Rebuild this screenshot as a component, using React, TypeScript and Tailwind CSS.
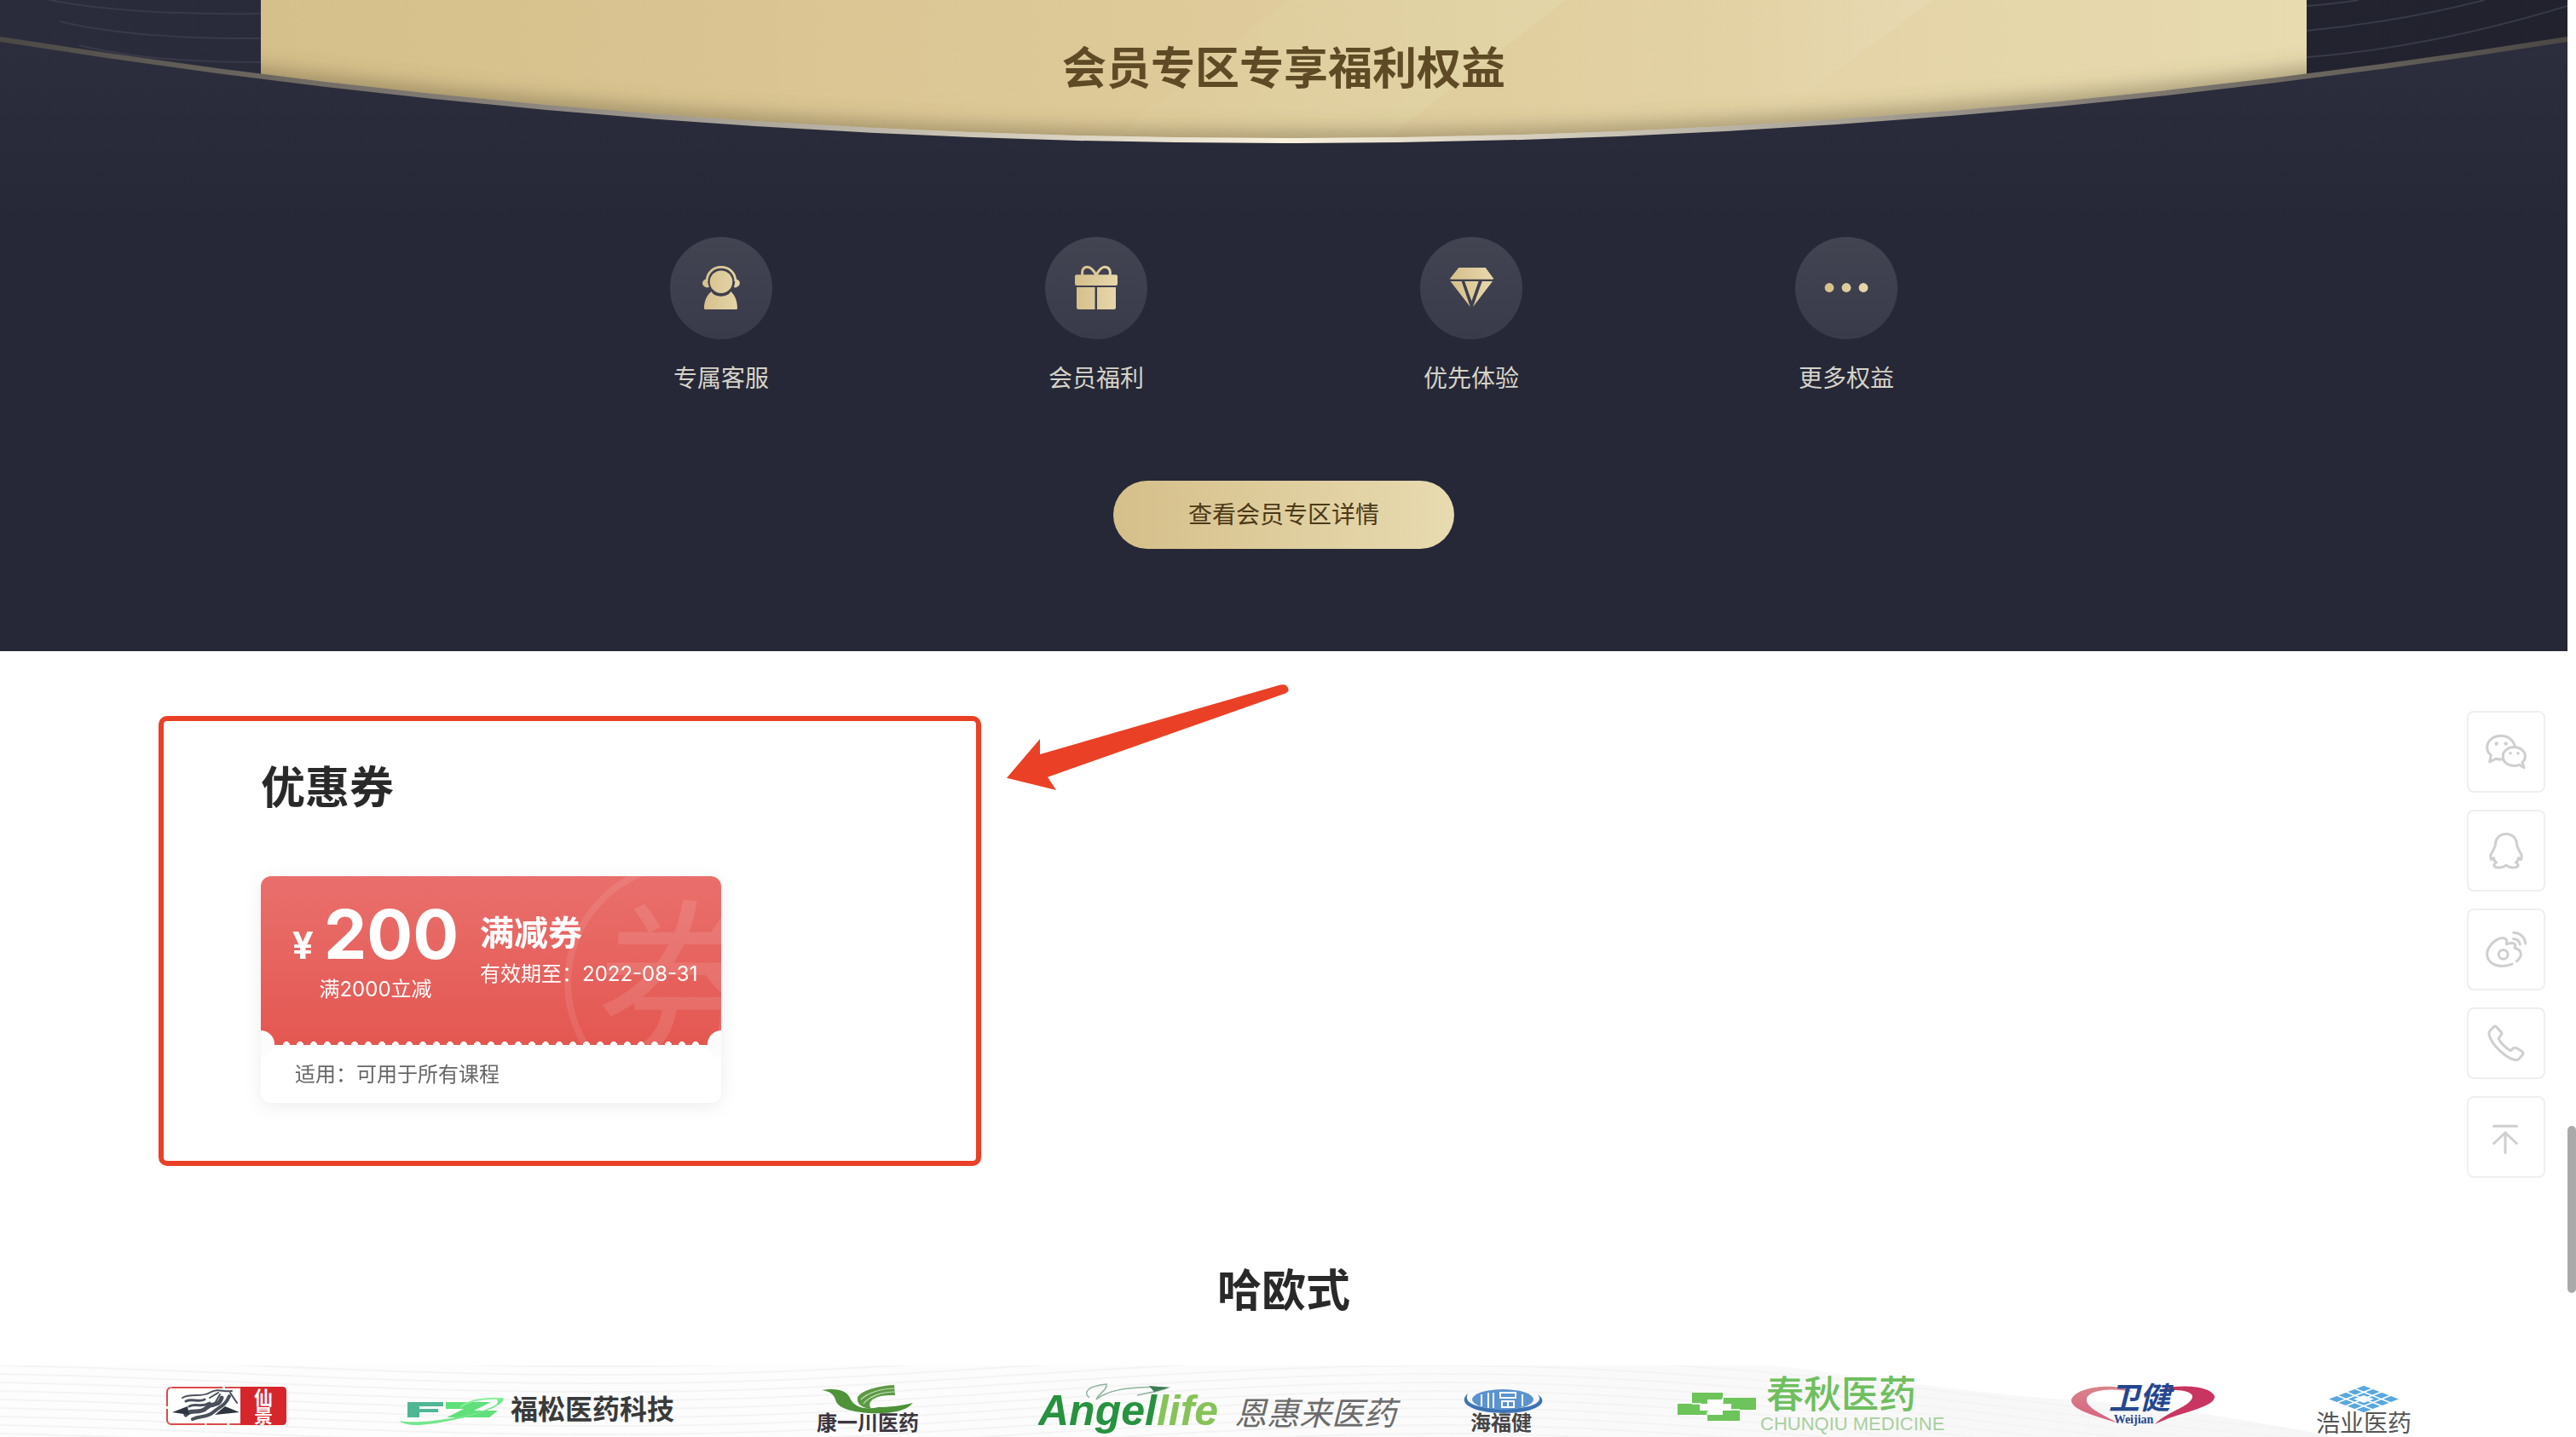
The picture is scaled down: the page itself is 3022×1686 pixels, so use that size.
import type { ReactNode } from "react";

function GoldGradient({ id }: { id: string }) {
  return (
    <defs>
      <linearGradient id={id} x1="34" y1="0" x2="86" y2="0" gradientUnits="userSpaceOnUse">
        <stop offset="0" stopColor="#d5be89" />
        <stop offset="1" stopColor="#e7d8ad" />
      </linearGradient>
    </defs>
  );
}

const benefits: { id: string; label: string; icon: ReactNode }[] = [
  {
    id: "service",
    label: "专属客服",
    icon: (
      <>
        <circle cx="60" cy="52.7" r="13.3" />
        <path
          d="M43.2 52C43.2 42 50.5 35.3 60 35.3S76.8 42 76.8 52"
          fill="none"
          stroke="url(#gold-service)"
          strokeWidth="2.8"
        />
        <path d="M41.8 49.5H43.8C44.3 53 44.8 56 46 58.6C45 59.6 43 59.6 41.5 58.8C37 57 36.8 51.5 41.8 49.5Z" />
        <path d="M78.2 49.5H76.2C76.4 53 76 56 75 58.6C75.2 59.6 77 59.6 78.5 58.8C83 57 83.2 51.5 78.2 49.5Z" />
        <path d="M48.5 64C52 71.5 67.500 71.5 71.300 64C76 68 79 75 79 83.500Q79 85 77.500 85H41.500Q40 85 40 83.500C40 75 43.500 68 48.500 64Z" />
      </>
    ),
  },
  {
    id: "gift",
    label: "会员福利",
    icon: (
      <>
        <path
          d="M44 45C42.500 39 45 35.300 49.500 35.300C54.500 35.300 57.500 40 60 45C62.500 40 65.500 35.300 70 35.300C74.500 35.300 77.500 39 76 45"
          fill="none"
          stroke="url(#gold-gift)"
          strokeWidth="3"
        />
        <rect x="35" y="44.300" width="50" height="12.700" rx="2" />
        <path d="M37 59H58.500V85H39.500Q37 85 37 82.500Z" />
        <path d="M61 59H83V82.500Q83 85 80.500 85H61Z" />
      </>
    ),
  },
  {
    id: "diamond",
    label: "优先体验",
    icon: (
      <>
        <path d="M45.300 36H76.700L85.700 48.300V49.700H35.500V48.300Z" />
        <path d="M35.500 52H48.600L58.800 82Z" />
        <path d="M52.200 52H68.600L60.400 75.300Z" />
        <path d="M72.700 52H85L62 82Z" />
      </>
    ),
  },
  {
    id: "more",
    label: "更多权益",
    icon: (
      <>
        <circle cx="40" cy="59.500" r="5.400" />
        <circle cx="60" cy="59.500" r="5.400" />
        <circle cx="80" cy="59.500" r="5.400" />
      </>
    ),
  },
];

function HeroArt() {
  return (
    <svg
      aria-hidden="true"
      className="absolute left-0 top-0 h-[260px] w-full"
      viewBox="0 0 3012 260"
      preserveAspectRatio="none"
    >
      <defs>
        <linearGradient id="arc" x1="0" x2="3012" y1="0" y2="0" gradientUnits="userSpaceOnUse">
          <stop offset="0" stopColor="#4b4845" />
          <stop offset="0.1" stopColor="#6b665f" />
          <stop offset="0.2" stopColor="#88827b" />
          <stop offset="0.33" stopColor="#bab4a7" />
          <stop offset="0.5" stopColor="#f8f0dc" />
          <stop offset="0.67" stopColor="#bab4a7" />
          <stop offset="0.8" stopColor="#88827b" />
          <stop offset="0.9" stopColor="#6b665f" />
          <stop offset="1" stopColor="#4b4845" />
        </linearGradient>
        <linearGradient id="below" x1="0" x2="0" y1="0" y2="1">
          <stop offset="0" stopColor="#2c2d3d" />
          <stop offset="1" stopColor="#262837" />
        </linearGradient>
        <linearGradient id="bandA" x1="1400" x2="1800" y1="0" y2="0" gradientUnits="userSpaceOnUse">
          <stop offset="0" stopColor="#e2dcae" stopOpacity="0.1" />
          <stop offset="1" stopColor="#e2daac" stopOpacity="0.45" />
        </linearGradient>
        <linearGradient id="bandB" x1="2060" x2="2260" y1="0" y2="0" gradientUnits="userSpaceOnUse">
          <stop offset="0" stopColor="#e8dcbc" stopOpacity="0" />
          <stop offset="1" stopColor="#e8dab6" stopOpacity="0.6" />
        </linearGradient>
        <clipPath id="panel">
          <path d="M306 0H2706V87A9589 9589 0 0 1 306 87Z" />
        </clipPath>
        <filter id="soft" x="-5%" y="-50%" width="110%" height="200%">
          <feGaussianBlur stdDeviation="13" />
        </filter>
      </defs>
      <g fill="none" stroke="#383a49" strokeWidth="2">
        <path d="M58 0C130 14 220 17 306 16" />
        <path d="M70 25C130 40 220 46 306 45" />
        <path d="M93 53C150 68 220 73 306 73" />
        <path d="M2706 7C2730 5 2750 3 2767 0" />
        <path d="M2706 36C2790 28 2860 14 2915 0" />
        <path d="M2706 67C2810 59 2910 38 3012 7" />
      </g>
      <g clipPath="url(#panel)">
        <path d="M1510 0H1837L1620 168H1300Z" fill="url(#bandA)" />
        <path d="M2080 0H2267L2040 168H1860Z" fill="url(#bandB)" />
        <path
          d="M0 50A9589 9589 0 0 0 3012 50"
          fill="none"
          stroke="#5f5538"
          strokeOpacity="0.6"
          strokeWidth="22"
          filter="url(#soft)"
        />
      </g>
      <path d="M0 46A9589 9589 0 0 0 3012 46V260H0Z" fill="url(#below)" />
      <path d="M0 46A9589 9589 0 0 0 3012 46" fill="none" stroke="url(#arc)" strokeWidth="6" />
    </svg>
  );
}

function Hero() {
  return (
    <section className="relative bg-[#262837] pb-[120px]">
      <div className="bg-gradient-to-r from-[#2b2c3b] to-[#21222e]">
        <div className="mx-auto h-[168px] max-w-[2400px] bg-gradient-to-r from-[#d5bf8a] via-[#dfcb9b] to-[#e8dbb0]" />
      </div>
      <HeroArt />
      <h2 className="relative -mt-[113px] text-center text-[52px] font-bold leading-[52px] text-[#5e4b26]">
        会员专区专享福利权益
      </h2>
      <ul className="relative mt-[171px] flex justify-center gap-[320px]">
        {benefits.map((b) => (
          <li key={b.id} className="flex w-[120px] flex-col items-center">
            <span className="size-[120px] rounded-full bg-gradient-to-b from-[#434452] to-[#3a3b4a]">
              <svg viewBox="0 0 120 120" className="size-full" fill={`url(#gold-${b.id})`} aria-hidden="true">
                <GoldGradient id={`gold-${b.id}`} />
                {b.icon}
              </svg>
            </span>
            <span className="mt-8 whitespace-nowrap text-[28px] leading-7 text-[#d6d3c9]">{b.label}</span>
          </li>
        ))}
      </ul>
      <div className="mt-[106px] flex justify-center">
        <button
          type="button"
          className="relative h-20 w-[400px] rounded-full bg-gradient-to-r from-[#d5bf8a] to-[#e8dbb0] text-[28px] text-[#4c3a18]"
        >
          查看会员专区详情
        </button>
      </div>
    </section>
  );
}

function Coupon() {
  return (
    <article className="relative mt-[77px] w-[540px] overflow-hidden rounded-xl bg-white">
      <div className="relative flex h-[198px] gap-6 overflow-hidden bg-gradient-to-b from-[#e96f6c] to-[#e45751] pl-9 text-white">
        <svg className="absolute right-0 top-0 h-[198px] w-[184px]" viewBox="0 0 184 198" aria-hidden="true">
          <circle cx="143" cy="125" r="139" fill="none" stroke="#fff" strokeOpacity="0.09" strokeWidth="8" />
          <text x="143" y="207" textAnchor="middle" fontSize="212" fill="#fff" fillOpacity="0.11">
            券
          </text>
        </svg>
        <div className="relative w-[197px] pt-[28px] text-center">
          <p className="flex items-baseline justify-center gap-3 whitespace-nowrap">
            <span className="text-[44px] font-bold leading-none">¥</span>
            <span className="text-[80px] font-bold leading-[80px]">200</span>
          </p>
          <p className="mt-[13px] text-2xl leading-6">满2000立减</p>
        </div>
        <div className="relative whitespace-nowrap pt-[47px]">
          <h3 className="text-[40px] font-bold leading-10">满减券</h3>
          <p className="mt-4 text-2xl leading-6">有效期至：2022-08-31</p>
        </div>
        <span className="absolute inset-x-[22px] bottom-0 h-1 bg-[radial-gradient(circle_at_8px_4px,#fff_4px,transparent_4px)] bg-[length:16px_4px]" />
      </div>
      <p className="px-10 pb-5 pt-[22px] text-2xl leading-[26px] text-[#666]">适用：可用于所有课程</p>
      <span className="absolute -left-4 top-[181px] size-8 rounded-full bg-[#fcfcfc]" />
      <span className="absolute -right-4 top-[181px] size-8 rounded-full bg-[#fcfcfc]" />
    </article>
  );
}

function CouponSection() {
  return (
    <section className="relative mx-auto max-w-[2400px] pt-[76px]">
      <div className="-ml-[120px] w-[965px] rounded-[10px] border-6 border-[#ea4025] pb-[68px] pl-[114px] pt-[53px]">
        <h2 className="text-[52px] font-bold leading-[52px] text-[#292929]">优惠券</h2>
        <div className="drop-shadow-[0_4px_10px_rgba(0,0,0,0.07)]">
          <Coupon />
        </div>
      </div>
      <svg
        className="absolute left-[874px] top-[38px] h-[128px] w-[334px]"
        viewBox="1180 802 334 128"
        fill="#ea4025"
        aria-hidden="true"
      >
        <path d="M1181 912.700L1220 867V885L1502 803.500Q1509 802 1511 807Q1513 811.500 1508 813.500L1229 911.700L1239 927Z" />
      </svg>
    </section>
  );
}

const tools: { label: string; tall: boolean; icon: ReactNode }[] = [
  {
    label: "微信",
    tall: true,
    icon: (
      <>
        <path d="M56.500 42C54.500 34 48 29.300 40 29.300C31 29.300 23.700 35 23.700 43C23.700 47 25.500 49.800 28.300 52L26.700 60L34.300 56.200C37 57 39 57.200 41.500 57" />
        <path d="M65 60.500C67.200 58.600 68.400 56.500 68.400 53.500C68.400 47 62.500 42.500 55.300 42.500S42.300 47 42.300 53.500S48 64.500 55.300 64.500C57.500 64.500 59.500 64 61.500 63.300L67 66.600Z" />
        <g fill="#cfcfcf" stroke="none">
          <circle cx="34.700" cy="38.500" r="2.200" />
          <circle cx="45.700" cy="38.500" r="2.200" />
          <circle cx="51" cy="49.800" r="1.800" />
          <circle cx="60" cy="49.800" r="1.800" />
        </g>
      </>
    ),
  },
  {
    label: "QQ",
    tall: true,
    icon: (
      <path d="M46 28.500C38.500 28.500 33.500 34 33.500 40.500C33.500 44 31 46.500 30 49.500C27.500 52.500 27.500 56 28.500 58.500C30 58.500 30.500 57.500 31.500 56.500C31.500 59 32.500 60.500 34.500 62C31.500 63.500 31 66 33.500 67.200C37 68.800 42.500 68 46 65.200C49.500 68 55 68.800 58.500 67.200C61 66 60.500 63.500 57.500 62C59.500 60.500 60.500 59 60.500 56.500C61.500 57.500 62 58.500 63.500 58.500C64.500 56 64.500 52.500 62 49.500C61 46.500 58.500 44 58.500 40.500C58.500 34 53.500 28.500 46 28.500Z" />
    ),
  },
  {
    label: "微博",
    tall: true,
    icon: (
      <>
        <path d="M53.300 65.100C45 68 36 68.500 30 64.500C23 60 22 52 26 45.500C30.500 38 38.500 33.500 43.500 34.800C47 35.800 47.300 38.500 46.300 41.800C50 40.500 54 39.500 56.200 41.500C57.300 42.800 56.800 44.500 56 46.200C60 47.200 63.300 49.200 63.300 53.500C63.300 56.500 61.500 59.300 58.300 61.800" />
        <circle cx="42.700" cy="53.800" r="5.400" />
        <path d="M54.700 28.300C62 28.300 68.300 33.500 68.700 41" />
        <path d="M54.700 35.500C58.500 35.700 61.500 38.200 62.300 42" />
      </>
    ),
  },
  {
    label: "电话",
    tall: false,
    icon: (
      <path d="M27 27.500L31.500 22.800Q33 21.300 34.600 22.800L40 28.800Q41.500 30.500 40.300 32L37 36.600C40 42 45.500 47.500 51.300 50.700L55 47.500Q56.500 46.700 58.500 47.700L64.500 51.500Q66.800 53.200 65.500 55.200L61.500 60Q59.500 62 57 61.800C45 59.500 28 42.500 26 31.500Q25.700 29 27 27.500Z" />
    ),
  },
  {
    label: "返回顶部",
    tall: true,
    icon: (
      <>
        <path d="M31.500 35.200H58.500" />
        <path d="M31.700 55.500L45 43L58.300 55.500" />
        <path d="M45 43V66.500" />
      </>
    ),
  },
];

function SideTools() {
  return (
    <nav aria-label="快捷工具" className="absolute right-9 top-[834px] flex w-[92px] flex-col gap-5">
      {tools.map((t) => (
        <button
          key={t.label}
          type="button"
          aria-label={t.label}
          className={`flex items-center justify-center rounded-lg border-2 border-[#efefef] bg-white ${
            t.tall ? "h-24" : "h-[84px]"
          }`}
        >
          <svg
            className="size-[60px]"
            viewBox={t.tall ? "16 18 60 60" : "16 12 60 60"}
            fill="none"
            stroke="#cfcfcf"
            strokeWidth="3"
            strokeLinecap="round"
            strokeLinejoin="round"
            aria-hidden="true"
          >
            {t.icon}
          </svg>
        </button>
      ))}
    </nav>
  );
}

const waves = Array.from({ length: 14 }, (_, i) => i * 10 - 20);

function Partners() {
  return (
    <div className="relative h-[84px] overflow-hidden">
      <svg
        className="absolute inset-0 size-full"
        viewBox="0 0 3012 84"
        preserveAspectRatio="none"
        aria-hidden="true"
      >
        <defs>
          <linearGradient id="strip" x1="0" x2="1" y1="0" y2="0">
            <stop offset="0" stopColor="#fdfdfd" />
            <stop offset="0.5" stopColor="#fcfcfc" />
            <stop offset="1" stopColor="#f6f6f6" />
          </linearGradient>
          <clipPath id="stripClip">
            <path d="M0 0H2080C2240 20 2330 35 2450 42C2560 50 2640 65 2740 84H0Z" />
          </clipPath>
        </defs>
        <path d="M0 0H2080C2240 20 2330 35 2450 42C2560 50 2640 65 2740 84H0Z" fill="url(#strip)" />
        <g clipPath="url(#stripClip)" fill="none" stroke="#f4f4f4" strokeWidth="2">
          {waves.map((y) => (
            <path
              key={y}
              d={`M0 ${y}C300 ${y + 6} 500 ${y + 26} 820 ${y + 20}S1500 ${y - 34} 1860 ${y - 16}S2300 ${y + 30} 2740 ${y + 70}`}
            />
          ))}
        </g>
      </svg>
      <div className="relative flex">
        <svg className="ml-[194px] h-[84px] w-[142px] shrink-0" viewBox="194 1602 142 84" role="img" aria-label="仙景">
          <rect x="196" y="1628" width="139" height="43" rx="5" fill="#fff" stroke="#dd4a4a" strokeWidth="2" strokeDasharray="60 3 24 2" />
          <path d="M282 1627H331Q336 1627 336 1632V1667Q336 1672 331 1672H282Z" fill="#d7262b" />
          <g fill="none" stroke="#4a505b" strokeLinecap="round">
            <path d="M214 1640C224 1634 236 1640 246 1634S262 1634 272 1632" strokeWidth="2" />
            <path d="M218 1644C226 1640 232 1646 240 1642M222 1650C230 1646 236 1652 246 1646" strokeWidth="3" />
            <path d="M218 1660C224 1652 234 1660 242 1652S256 1652 260 1640" strokeWidth="5" />
            <path d="M226 1665C236 1660 242 1664 250 1657S264 1650 269 1638" strokeWidth="4" />
            <path d="M246 1640L256 1634M250 1650L258 1636M270 1634L278 1646" strokeWidth="2" />
          </g>
          <path d="M202 1657L220 1650L222 1660ZM252 1660L264 1650L281 1657Z" fill="#2f3540" />
          <g fill="#fff" fontSize="22" fontWeight="700" textAnchor="middle">
            <text x="309" y="1648">仙</text>
            <text x="309" y="1669">景</text>
          </g>
        </svg>

        <svg className="ml-[132px] h-[84px] w-[332px] shrink-0" viewBox="468 1602 332 84" role="img" aria-label="福松医药科技">
          <path d="M478 1645H520V1650H492V1653H514V1657H492V1663H478Z" fill="#4fb795" />
          <path d="M523 1645H576L556 1655H584L574 1663H524L544 1653H523Z" fill="#5fe07a" />
          <path d="M468 1667C490 1672 560 1662 582 1648Q586 1644 582 1641L590 1640C596 1652 530 1670 490 1672Q474 1672 468 1667Z" fill="#74e68c" />
          <path d="M540 1651C552 1642 568 1640 588 1641" stroke="#8af09c" strokeWidth="2" fill="none" />
          <text x="599" y="1665" fontSize="32" fontWeight="700" fill="#3a3a3a">福松医药科技</text>
        </svg>

        <svg className="ml-[157px] h-[84px] w-[122px] shrink-0" viewBox="957 1602 122 84" role="img" aria-label="康一川医药">
          <path d="M964 1631C984 1628 994 1632 998 1642C1002 1650 1014 1655 1030 1651C1042 1651 1060 1649 1071 1646C1062 1657 1040 1659 1020 1658C992 1656 982 1650 980 1642C978 1635 972 1632 964 1631Z" fill="#4e9239" />
          <path d="M1049 1625C1026 1626 1004 1634 1006 1642C1006 1648 1012 1652 1022 1653C1016 1644 1026 1636 1050 1637Z" fill="#5c9a45" />
          <path d="M1010 1642C1018 1634 1034 1629 1050 1629M1013 1647C1020 1638 1034 1633 1050 1633" stroke="#c9e0bf" strokeWidth="1.200" fill="none" />
          <text x="1018" y="1678" fontSize="24" fontWeight="700" textAnchor="middle" fill="#3b3640">康一川医药</text>
        </svg>

        <svg className="ml-[139px] h-[84px] w-[428px] shrink-0" viewBox="1218 1602 428 84" role="img" aria-label="Angellife 恩惠来医药">
          <path
            d="M1278 1640C1270 1634 1276 1626 1298 1624C1300 1630 1290 1634 1286 1642C1300 1630 1330 1626 1370 1628C1360 1633 1346 1634 1334 1637"
            fill="none"
            stroke="#8fb39c"
            strokeWidth="1.500"
          />
          <path d="M1348 1626L1371 1628L1354 1633Z" fill="#3e7c58" />
          <text x="1218" y="1672" fontSize="50" fontWeight="700" fontStyle="italic" fontFamily="'Liberation Sans', sans-serif" fill="#27923f">
            Angel<tspan fill="#86c357">life</tspan>
          </text>
          <text x="1448" y="1672" fontSize="38" fontStyle="italic" fill="#6b6b6b">恩惠来医药</text>
        </svg>

        <svg className="ml-[71px] h-[84px] w-[94px] shrink-0" viewBox="1717 1602 94 84" role="img" aria-label="海福健">
          <path d="M1722 1635C1708 1647 1730 1658 1764 1658S1820 1647 1804 1636C1812 1646 1796 1653 1764 1653S1716 1646 1722 1635Z" fill="#3d73b4" />
          <ellipse cx="1763" cy="1642" rx="36" ry="12" fill="#5b93cf" />
          <g stroke="#fff" strokeWidth="2" fill="none">
            <path d="M1738 1636V1650M1746 1634V1652M1752 1634V1652M1760 1634H1778V1640H1760ZM1762 1644H1776V1651H1762ZM1769 1644V1651M1786 1636V1650" />
          </g>
          <text x="1761" y="1678" fontSize="24" fontWeight="700" textAnchor="middle" fill="#454545">海福健</text>
        </svg>

        <svg className="ml-[155px] h-[84px] w-[342px] shrink-0" viewBox="1966 1602 342 84" role="img" aria-label="春秋医药 CHUNQIU MEDICINE">
          <path d="M1985 1634H2021V1640H2060V1654H2041V1667H2003V1660H1968V1647H1985Z" fill="#6cc45a" />
          <path d="M2003 1642H2021V1647H2031V1655H2021V1660H2004V1655H1994V1647H2003Z" fill="#fff" />
          <path d="M1985 1647H1996M2021 1640V1646M2031 1654H2041M2003 1660V1656" stroke="#fff" strokeWidth="1.500" />
          <text x="2072" y="1652" fontSize="44" fontWeight="500" fill="#6fbf5f">春秋医药</text>
          <text x="2065" y="1678" fontSize="22" fontFamily="'Liberation Sans', sans-serif" fill="#a9cf9f">CHUNQIU MEDICINE</text>
        </svg>

        <svg className="ml-[121px] h-[84px] w-[170px] shrink-0" viewBox="2429 1602 170 84" role="img" aria-label="卫健">
          <defs>
            <linearGradient id="heart" x1="0" x2="0" y1="0" y2="1">
              <stop offset="0" stopColor="#d9848a" />
              <stop offset="1" stopColor="#d65f80" />
            </linearGradient>
          </defs>
          <path d="M2502 1633C2484 1622 2436 1626 2430 1642C2428 1654 2460 1662 2486 1670C2462 1658 2446 1650 2448 1641C2450 1630 2480 1628 2502 1633Z" fill="url(#heart)" />
          <path d="M2532 1632C2546 1624 2592 1624 2598 1638C2600 1652 2552 1658 2528 1671C2542 1656 2572 1650 2572 1638C2570 1630 2548 1630 2532 1632Z" fill="#c93560" />
          <text x="2510" y="1653" fontSize="36" fontWeight="700" fontStyle="italic" textAnchor="middle" fill="#24478f">卫健</text>
          <text x="2503" y="1670" fontSize="14" fontWeight="700" textAnchor="middle" fontFamily="'Liberation Serif', serif" fill="#24478f">Weijian</text>
        </svg>

        <svg className="ml-[114px] h-[84px] w-[120px] shrink-0" viewBox="2713 1602 120 84" role="img" aria-label="浩业医药">
          <g stroke="#fff" strokeWidth="1.500">
            <path d="M2773 1625L2816 1641.500L2773 1658L2730 1641.500Z" fill="#5aa7dd" />
            <path d="M2762 1629L2805 1646M2752 1633L2795 1650M2741 1637L2784 1654M2784 1629L2741 1646M2794 1633L2751 1650M2805 1637L2762 1654" fill="none" />
          </g>
          <path d="M2773 1637L2785 1641.500L2773 1646L2761 1641.500Z" fill="#f3f9fd" />
          <text x="2773" y="1680" fontSize="28" textAnchor="middle" fill="#555">浩业医药</text>
        </svg>
      </div>
    </div>
  );
}

export default function App() {
  return (
    <div className="relative min-h-screen overflow-hidden bg-white pr-2.5 font-['Inter','Noto_Sans_CJK_SC',sans-serif]">
      <main>
        <Hero />
        <CouponSection />
        <section>
          <h2 className="mb-[61px] mt-[121px] text-center text-[52px] font-bold leading-[52px] text-[#292929]">
            哈欧式
          </h2>
          <Partners />
        </section>
      </main>
      <SideTools />
      <div className="absolute right-0 top-[1321px] h-[196px] w-2.5 rounded-md bg-[#aaa]" />
    </div>
  );
}
